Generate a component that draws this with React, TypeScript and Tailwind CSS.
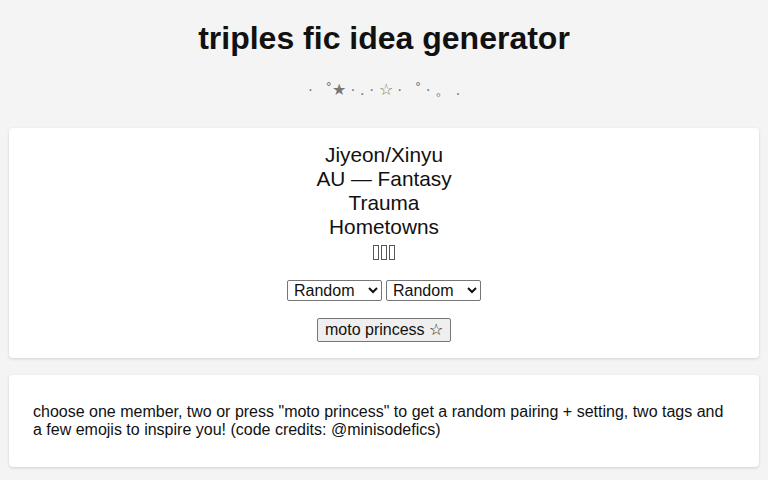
const Tofu = () => (
  <span className="inline-block h-[15px] w-[6px] border-[1.5px] border-[#555] align-[-2px]" />
);

const App = () => {
  return (
    <div className="min-h-[480px] bg-[#f4f4f4] px-[9px] pt-[18px] pb-4 font-['Liberation_Sans',Arial,sans-serif] text-[#111]">
      <h1 className="text-center text-[32px] font-bold leading-[40px] text-[#111]">
        triples fic idea generator
      </h1>
      <p className="mt-[22px] whitespace-pre text-center text-[16px] leading-[20px] text-[#777]">
        {"·   ˚★ · . · ☆ ·   ˚ · 。 ."}
      </p>
      <div className="mt-[28px] rounded bg-white px-6 pt-[15px] pb-[16px] text-center shadow-[0_1px_3px_rgba(0,0,0,0.15)]">
        <div className="text-[20.8px] leading-[24px]">
          <div>Jiyeon/Xinyu</div>
          <div>AU — Fantasy</div>
          <div>Trauma</div>
          <div>Hometowns</div>
          <div className="flex h-[24px] items-center justify-center gap-[2px] pt-[2px]">
            <Tofu />
            <Tofu />
            <Tofu />
          </div>
        </div>
        <div className="mt-[17px] flex justify-center gap-[4px]">
          <select className="h-[21px] w-[95px] rounded-[2px] border border-[#767676] bg-white px-[2px] text-[16px]">
            <option>Random</option>
          </select>
          <select className="h-[21px] w-[95px] rounded-[2px] border border-[#767676] bg-white px-[2px] text-[16px]">
            <option>Random</option>
          </select>
        </div>
        <div className="mt-[17px] flex justify-center">
          <button
            type="button"
            className="h-[24px] rounded-[2px] border border-[#767676] bg-[#efefef] px-[7px] text-[16px] leading-[20px]"
          >
            moto princess ☆
          </button>
        </div>
      </div>
      <div className="mt-[17px] rounded bg-white px-6 pt-[28px] pb-[28px] shadow-[0_1px_3px_rgba(0,0,0,0.15)]">
        <p className="text-[16px] leading-[18px]">
          choose one member, two or press "moto princess" to get a random pairing + setting, two tags and a few emojis to inspire you! (code credits: @minisodefics)
        </p>
      </div>
    </div>
  );
};

export default App;
